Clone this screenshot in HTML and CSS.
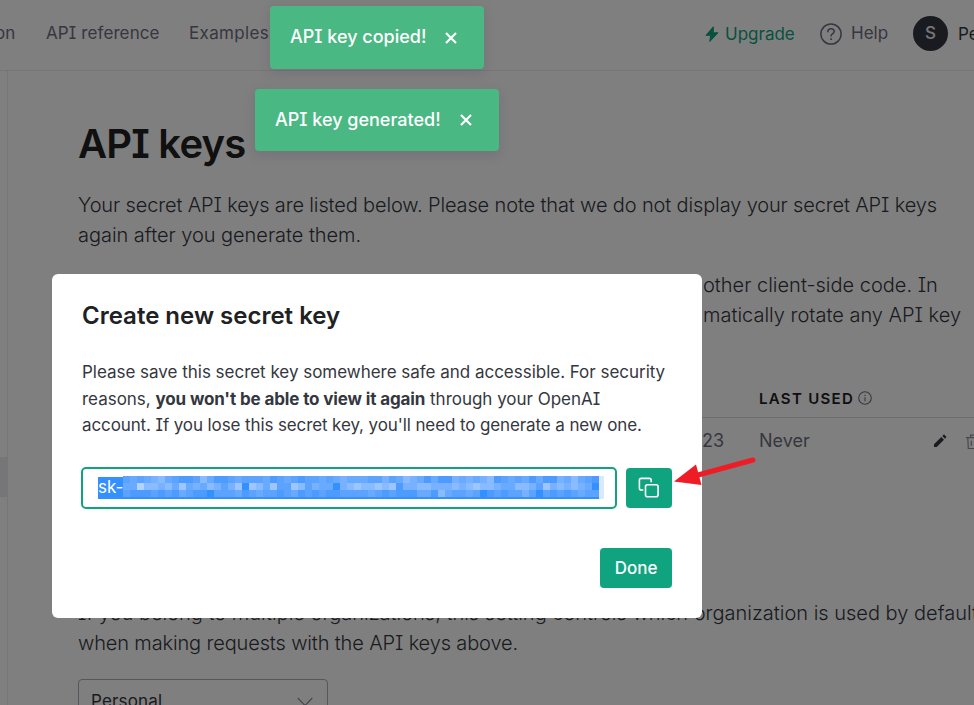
FILE: index.html
```
<!DOCTYPE html>
<html lang="en">

<head>
  <meta charset="UTF-8" />
  <meta name="viewport" content="width=device-width, initial-scale=1.0" />
  <title>API keys</title>
  <link rel="stylesheet" href="styles.css">
</head>

<body>
  <header class="topbar">
    <nav class="nav">
      <span class="nav-docs">on</span>
      <span class="nav-api">API reference</span>
      <span class="nav-examples">Examples</span>
    </nav>
    <div class="account">
      <span class="upgrade">
        <svg width="14" height="16" viewBox="0 0 14 16"><path d="M8.3.8 1 9.3h4.6L4.8 15.5 13 6.8H8.3z" fill="currentColor" stroke="currentColor" stroke-linejoin="round" /></svg>
        <span>Upgrade</span>
      </span>
      <span class="help">
        <svg width="22" height="22" viewBox="0 0 22 22" fill="none" stroke="currentColor" stroke-width="1.5" stroke-linecap="round"><circle cx="11" cy="11" r="10.1" /><path d="M7.8 8.7c.1-1.8 1.4-2.9 3.2-2.9s3.2 1.1 3.2 2.8c0 2.2-3.2 2.4-3.2 4.4" /><circle cx="11" cy="16.1" r=".6" fill="currentColor" stroke-width=".8" /></svg>
        <span>Help</span>
      </span>
      <span class="avatar">S</span>
      <span class="user">Personal</span>
    </div>
  </header>

  <div class="layout">
    <aside class="sidebar"><div class="sidebar-item"></div></aside>
    <main class="content">
      <h1>API keys</h1>
      <p><span class="tight">Your secret API keys are listed below. Please note that we do not display your secret API keys</span><br>
        again after you generate them.</p>
      <p class="warning">other client-side code. In<br>
        matically rotate any API key</p>
      <div class="table">
        <div class="row row-head">
          <span class="cell-used">LAST USED
            <svg width="14" height="14" viewBox="0 0 14 14" fill="none" stroke="currentColor" stroke-width="1.1"><circle cx="7" cy="7" r="6.3" /><path d="M7 6.2v4M7 3.8v1.1" /></svg>
          </span>
        </div>
        <div class="row row-key">
          <span class="cell-date">23</span>
          <span class="cell-used">Never</span>
          <span class="cell-actions">
            <svg width="14" height="14" viewBox="0 0 14 14" fill="#353740"><path d="M1 10.3 8.3 3l2.7 2.7L3.7 13H1zM9.3 2l1.1-1.1c.4-.4.8-.4 1.2 0l1.5 1.5c.4.4.4.8 0 1.2L12 4.7z" /></svg>
            <svg width="14" height="16" viewBox="0 0 14 16" fill="none" stroke="#8e8ea0" stroke-width="1.2"><path d="M0 3.6h14M4.6 3.4V1.2h4.8v2.2M1.8 3.8l.5 10.7h9.4l.5-10.7M5.3 6.7v5M8.7 6.7v5" /></svg>
          </span>
        </div>
      </div>
      <p class="org">If you belong to multiple organizations, this setting controls which organization is used by default<br>
        <span class="tight">when making requests with the API keys above.</span></p>
      <div class="select">
        <span>Personal</span>
        <svg width="16" height="10" viewBox="0 0 16 10" fill="none" stroke="#8e8ea0" stroke-width="1.2"><path d="M.7 1 8 8.500 15.300 1" /></svg>
      </div>
    </main>
  </div>

  <div class="backdrop"></div>

  <div class="modal">
    <h2>Create new secret key</h2>
    <p class="modal-body">Please save this secret key somewhere safe and accessible. For security<br>
      reasons, <b>you won't be able to view it again</b> through your OpenAI<br>
      <span class="tight">account. If you lose this secret key, you'll need to generate a new one.</span></p>
    <div class="key-row">
      <div class="key-input">
        <span class="key-prefix">sk-</span><span class="key-mask" id="mask"></span><span class="key-end"></span>
      </div>
      <button class="btn btn-copy">
        <svg width="22" height="22" viewBox="0 0 22 22" fill="none" stroke="#fff" stroke-width="1.6" stroke-linejoin="round"><path d="M5.300 13H3.300C2 13 1.400 12.400 1.400 11.200V3.200C1.400 2 2 1.400 3.200 1.400H11.200C12.400 1.400 13.200 2 13.200 3.200V5.300" /><rect x="7.500" y="7.700" width="12.600" height="12" rx="2" /></svg>
      </button>
    </div>
    <div class="modal-footer"><button class="btn btn-done">Done</button></div>
  </div>

  <div class="toasts">
    <div class="toast toast-copied"><span>API key copied!</span>
      <svg width="12" height="12" viewBox="0 0 12 12"><path d="M1 1l10 10M11 1 1 11" stroke="#fff" stroke-width="2.2" /></svg>
    </div>
    <div class="toast"><span>API key generated!</span>
      <svg width="12" height="12" viewBox="0 0 12 12"><path d="M1 1l10 10M11 1 1 11" stroke="#fff" stroke-width="2.2" /></svg>
    </div>
  </div>

  <svg class="arrow" width="84" height="32" viewBox="0 0 84 32"><path d="M24 20 79 5" stroke="#ee1c25" stroke-width="5" stroke-linecap="round" /><path d="M0 26.500 22 9.500 27.500 30z" fill="#ee1c25" /></svg>

  <script src="mask.js"></script>
</body>

</html>
```
FILE: styles.css
```
* {
  margin: 0;
  padding: 0;
  box-sizing: border-box;
}

html, body {
  width: 100%;
  height: 705px;
  overflow: hidden;
  background: #fff;
  color: #353740;
  font-family: Inter, "Open Sans", sans-serif;
  font-feature-settings: "cv08";
  white-space: nowrap;
}

svg {
  display: block;
  flex: none;
}

.topbar {
  display: flex;
  justify-content: space-between;
  height: 71px;
  border-bottom: 1px solid #ececf1;
  font-size: 17px;
  line-height: 67px;
  color: #6e6e80;
}

.nav {
  display: flex;
}

.nav-docs {
  width: 46px;
  margin-left: -5px;
}

.nav-api {
  width: 143px;
  margin-left: 5px;
  letter-spacing: 0.1px;
}

.nav-examples {
  letter-spacing: 0.35px;
}

.account {
  display: flex;
  width: 269px;
}

.account > * {
  flex: none;
}

.upgrade {
  display: flex;
  width: 115px;
  line-height: 69px;
  color: #10a37f;
}

.upgrade svg {
  margin: 26px 6px 0 0;
}

.help {
  display: flex;
  width: 93px;
}

.help svg {
  margin: 23px 9px 0 0;
}

.avatar {
  width: 35px;
  height: 35px;
  margin: 16px 10px 0 0;
  border-radius: 50%;
  background: #353740;
  color: #ececf1;
  font-weight: 500;
  line-height: 35px;
  text-align: center;
}

.user {
  line-height: 69px;
  color: #353740;
}

.layout {
  display: flex;
  height: 634px;
}

.sidebar {
  flex: none;
  width: 8px;
  padding-top: 386px;
  border-right: 1px solid #ececf1;
}

.sidebar-item {
  height: 40px;
  background: #ececf1;
}

.content {
  flex: none;
  width: 966px;
  padding: 48px 0 0 70px;
  font-size: 20px;
  line-height: 30px;
}

h1 {
  color: #202123;
  font-size: 40px;
  font-weight: 600;
  line-height: 50px;
  letter-spacing: -0.8px;
}

.content p {
  margin-top: 21px;
  font-weight: 300;
  letter-spacing: -0.04px;
}

.content .tight {
  letter-spacing: -0.14px;
}

.content .warning {
  margin: 20px 0 0 625px;
  letter-spacing: 0;
}

.table {
  margin: 49px 0 0 622px;
}

.row {
  display: flex;
  height: 45px;
  font-size: 18px;
  line-height: 45px;
  color: #6e6e80;
}

.row-head {
  height: 39px;
  padding-left: 59px;
  font-size: 15px;
  font-weight: 600;
  line-height: 39px;
  letter-spacing: 1.3px;
  color: #202123;
  border-bottom: 1px solid #d9d9e3;
}

.row-head .cell-used {
  display: flex;
  gap: 4px;
}

.row-head svg {
  margin-top: 12px;
  color: #6e6e80;
}

.row-key {
  padding-left: 2px;
}

.cell-date {
  flex: none;
  width: 57px;
}

.row .cell-used {
  flex: none;
  width: 174px;
}

.cell-actions {
  display: flex;
  flex: none;
  gap: 19px;
  padding-top: 16px;
}

.content .org {
  margin-top: 135px;
  letter-spacing: 0;
}

.select {
  display: flex;
  justify-content: space-between;
  width: 250px;
  height: 42px;
  margin-top: 21px;
  padding: 0 14px 0 12px;
  border: 1px solid #acacbe;
  border-radius: 4px;
  font-size: 17px;
  line-height: 42px;
  letter-spacing: 0.15px;
}

.select svg {
  margin-top: 17px;
}

.backdrop {
  position: absolute;
  inset: 0;
  background: rgba(0, 0, 0, 0.5);
}

.modal {
  position: absolute;
  left: 52px;
  top: 274px;
  width: 650px;
  height: 344px;
  padding: 26px 30px 30px;
  border-radius: 6px;
  background: #fff;
}

h2 {
  color: #202123;
  font-size: 24px;
  font-weight: 600;
  line-height: 32px;
}

.modal-body {
  margin-top: 27px;
  font-size: 17px;
  line-height: 26.6px;
  letter-spacing: -0.02px;
}

.modal-body b {
  letter-spacing: -0.13px;
}

.modal-body .tight {
  letter-spacing: -0.11px;
}

.key-row {
  display: flex;
  gap: 9px;
  margin: 28px 0 0 -1px;
}

.key-input {
  display: flex;
  width: 536px;
  height: 42px;
  padding: 7px 0 0 15px;
  border: 2px solid #10a37f;
  border-radius: 5px;
}

.key-prefix {
  width: 25px;
  height: 22px;
  margin-top: 1px;
  background: #3390ff;
  color: #fff;
  font-size: 17px;
  line-height: 21px;
}

.key-mask {
  display: grid;
  grid-template: repeat(3, 7px) / repeat(68, 7px);
  height: 23px;
  background: #3390ff;
}

/* tints of the selected text, dark to light */
.tint-0 { background: #3390ff; }
.tint-1 { background: #4d9bff; }
.tint-2 { background: #5ba3ff; }
.tint-3 { background: #68aaff; }
.tint-4 { background: #78b1ff; }
.tint-5 { background: #88bbff; }
.tint-6 { background: #9dc6ff; }
.tint-7 { background: #b3d3ff; }

.key-end {
  width: 5px;
  height: 23px;
  background: #dbe9ff;
}

.btn {
  border: 0;
  border-radius: 4px;
  background: #10a37f;
  color: #fff;
  font-family: inherit;
}

.btn-copy {
  display: flex;
  justify-content: center;
  align-items: center;
  width: 46px;
  height: 40px;
  margin-top: 1px;
}

.modal-footer {
  display: flex;
  justify-content: flex-end;
  margin-top: 39px;
}

.btn-done {
  width: 72px;
  height: 40px;
  font-size: 17px;
  font-weight: 500;
}

.toasts {
  position: absolute;
  top: 6px;
  left: 255px;
  display: flex;
  flex-direction: column;
  align-items: center;
  gap: 20px;
  width: 244px;
}

.toast {
  display: flex;
  justify-content: space-between;
  align-items: center;
  width: 244px;
  height: 62px;
  padding: 0 27px 0 20px;
  border-radius: 4px;
  background: #4ab883;
  color: #fff;
  font-size: 18px;
  font-weight: 500;
  box-shadow: 0 4px 12px rgba(50, 50, 93, 0.15);
}

.toast span {
  padding-bottom: 2px;
}

.toast-copied {
  width: 214px;
  height: 63px;
}

.arrow {
  position: absolute;
  left: 674px;
  top: 455px;
}
```
FILE: mask.js
```
// one digit per block of the masked key
const rows = [
  '23234532112531123222312321223234333224235431311434345123231311435321',
  '33755453634354246065362265243304565565614455444545655433554264545430',
  '21112121321102223123221231212112222321211133153223201212242021212322'
];

const mask = document.getElementById('mask');

rows.forEach(row => {
  row.slice(0, 68).split('').forEach(tint => {
    const cell = document.createElement('span');
    cell.className = 'tint-' + tint;
    mask.appendChild(cell);
  });
});
```
